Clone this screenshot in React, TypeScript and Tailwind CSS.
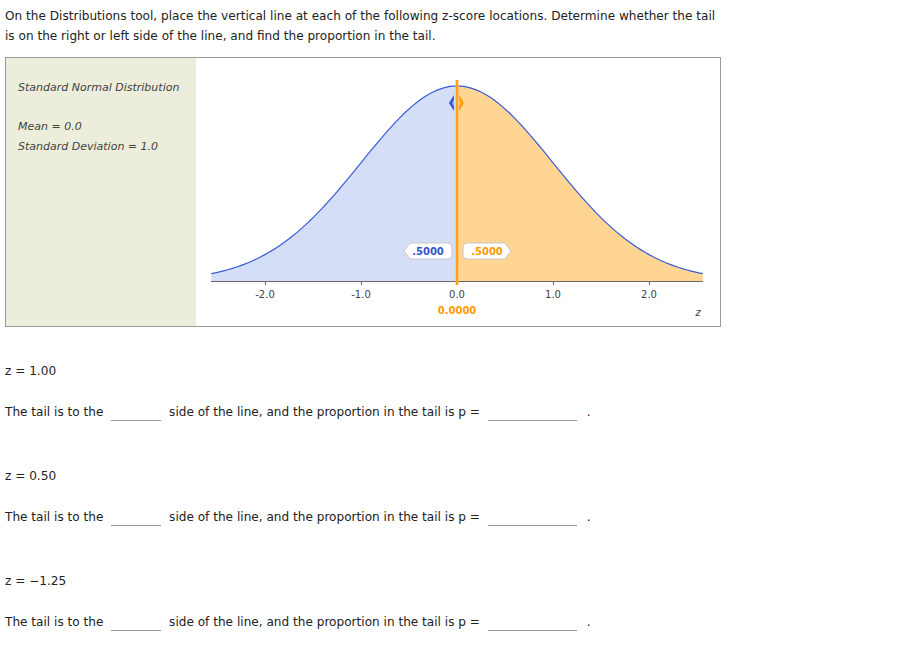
import React from "react";

// chart geometry (svg local px)
const Z0 = 261;
const UNIT = 96;
const BASE = 223;
const PEAK_H = 195;

const pdf = (z: number) => Math.exp(-(z * z) / 2);

function curvePoints(from: number, to: number) {
  const pts: string[] = [];
  const steps = 120;
  for (let i = 0; i <= steps; i++) {
    const z = from + ((to - from) * i) / steps;
    pts.push(`${(Z0 + z * UNIT).toFixed(2)},${(BASE - pdf(z) * PEAK_H).toFixed(2)}`);
  }
  return pts;
}

function DistributionChart() {
  const left = curvePoints(-2.56, 0);
  const right = curvePoints(0, 2.56);
  const all = curvePoints(-2.56, 2.56);
  const ticks = [-2, -1, 0, 1, 2];

  return (
    <svg width="523" height="268" className="block" style={{ fontFamily: '"DejaVu Sans", Verdana, sans-serif' }}>
      {/* shaded halves */}
      <polygon points={`${left.join(" ")} ${Z0},${BASE} ${Z0 - 2.56 * UNIT},${BASE}`} fill="#d4dff7" />
      <polygon points={`${right.join(" ")} ${Z0 + 2.56 * UNIT},${BASE} ${Z0},${BASE}`} fill="#ffd594" />
      <polyline points={all.join(" ")} fill="none" stroke="#3a5bd9" strokeWidth="1.2" />

      {/* axis */}
      <line x1={15} y1={BASE + 0.5} x2={507} y2={BASE + 0.5} stroke="#666" strokeWidth="1" />
      {ticks.map((t) => (
        <g key={t}>
          <line x1={Z0 + t * UNIT + 0.5} y1={BASE} x2={Z0 + t * UNIT + 0.5} y2={BASE + 4} stroke="#666" />
          <text x={Z0 + t * UNIT} y={BASE + 17} textAnchor="middle" fontSize="10" fill="#444">
            {t.toFixed(1)}
          </text>
        </g>
      ))}
      <text x={Z0} y={BASE + 33} textAnchor="middle" fontSize="10" fontWeight="bold" fill="#ff9900">
        0.0000
      </text>
      <text x={502} y={BASE + 35} textAnchor="middle" fontSize="10" fontStyle="italic" fill="#444">
        z
      </text>

      {/* value tags */}
      <path
        d="M208,193 L214,185 L251,185 Q256,185 256,190 L256,196 Q256,201 251,201 L214,201 Z"
        fill="#fff"
        stroke="#c8c8c8"
      />
      <text x={232} y={197} textAnchor="middle" fontSize="10" fontWeight="bold" fill="#3355cc">
        .5000
      </text>
      <path
        d="M272,185 L309,185 L315,193 L309,201 L272,201 Q267,201 267,196 L267,190 Q267,185 272,185 Z"
        fill="#fff"
        stroke="#c8c8c8"
      />
      <text x={291} y={197} textAnchor="middle" fontSize="10" fontWeight="bold" fill="#ff9900">
        .5000
      </text>

      {/* cut line and handles */}
      <line x1={Z0} y1={22} x2={Z0} y2={BASE + 4} stroke="#ffbe5c" strokeWidth="3" />
      <line x1={Z0} y1={22} x2={Z0} y2={BASE + 4} stroke="#ff9900" strokeWidth="1.5" />
      <polygon points={`${Z0 - 3},37 ${Z0 - 8},45 ${Z0 - 3},53`} fill="#3355dd" />
      <polygon points={`${Z0 - 3},41 ${Z0 - 5},45 ${Z0 - 3},49`} fill="#8fa6f5" />
      <polygon points={`${Z0 + 2},37 ${Z0 + 7},45 ${Z0 + 2},53`} fill="#ff9900" />
      <polygon points={`${Z0 + 2},41 ${Z0 + 4},45 ${Z0 + 2},49`} fill="#ffc46a" />
    </svg>
  );
}

function Blank({ width }: { width: string }) {
  return <span className={`inline-block ${width} h-[15px] border-b border-[#999] align-[-5px]`} />;
}

function Question({ z, first }: { z: string; first?: boolean }) {
  return (
    <div className={first ? "mt-[34px]" : "mt-[44px]"}>
      <div className="leading-[20px]">z = {z}</div>
      <div className="mt-[21px] leading-[20px]">
        The tail is to the <span className="mx-[4px]"><Blank width="w-[50px]" /></span> side of the line, and the
        proportion in the tail is p = <span className="mx-[4px]"><Blank width="w-[89px]" /></span>
        <span className="ml-[6px]">.</span>
      </div>
    </div>
  );
}

export default function App() {
  return (
    <div
      className="w-[908px] h-[647px] bg-white px-[5px] pt-[6px] text-[12.1px] text-[#222] overflow-hidden"
      style={{ fontFamily: '"DejaVu Sans", Tahoma, Verdana, sans-serif' }}
    >
      <p className="leading-[20px] w-[715px]">
        On the Distributions tool, place the vertical line at each of the following z-score locations. Determine whether
        the tail is on the right or left side of the line, and find the proportion in the tail.
      </p>

      <div className="mt-[11px] w-[716px] h-[270px] border border-[#999] flex">
        <div className="w-[190px] bg-[#ecedda] pl-[12px] pt-[22px] text-[11px] italic text-[#444]">
          <div className="leading-[16px]">Standard Normal Distribution</div>
          <div className="mt-[23px] leading-[16px]">Mean = 0.0</div>
          <div className="mt-[4px] leading-[16px]">Standard Deviation = 1.0</div>
        </div>
        <div className="flex-1 bg-white">
          <DistributionChart />
        </div>
      </div>

      <Question z="1.00" first />
      <Question z="0.50" />
      <Question z="−1.25" />
    </div>
  );
}
